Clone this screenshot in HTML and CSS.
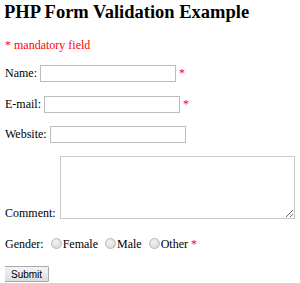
FILE: index.html
```html
<!DOCTYPE html>
<html lang="en">
<head>
	<meta charset="UTF-8">
	<title>PHP Form Validation Example</title>
	<link rel="stylesheet" href="styles.css">
</head>
<body>
	<h2 class="pageTitle">PHP Form Validation Example</h2>
	<p class="note"><span class="error">* mandatory field</span></p>
	<form class="valForm" method="post" action="#">
		<div class="row rowFirst">
			<label for="name">Name:</label>
			<input type="text" id="name" name="name">
			<span class="error">*</span>
		</div>
		<div class="row">
			<label for="email">E-mail:</label>
			<input type="text" id="email" name="email">
			<span class="error">*</span>
		</div>
		<div class="row">
			<label for="website">Website:</label>
			<input type="text" id="website" name="website">
		</div>
		<div class="row rowComment">
			<label for="comment">Comment:</label>
			<textarea id="comment" name="comment"></textarea>
		</div>
		<div class="genderRow">
			Gender:
			<input type="radio" name="gender" value="female">Female
			<input type="radio" name="gender" value="male">Male
			<input type="radio" name="gender" value="other">Other
			<span class="error">*</span>
		</div>
		<div class="submitRow">
			<input type="submit" name="submit" value="Submit">
		</div>
	</form>
</body>
</html>
```

FILE: styles.css
```css
body {
  margin: 0 5px;
  font-family: "Liberation Serif", "Times New Roman", serif;
  font-size: 12px;
  color: #000;
  background: #fff;
}
.pageTitle {
  margin: 2px 0 0 -1px;
  font-size: 18.5px;
  font-weight: bold;
}
.note {
  margin: 15px 0 0;
}
.error {
  color: #ff0000;
}
.valForm .row {
  display: flex;
  align-items: center;
  gap: 3px;
  height: 17px;
  margin-top: 13.5px;
}
.valForm .rowFirst {
  margin-top: 12px;
}
.valForm .row input[type="text"] {
  box-sizing: border-box;
  width: 136px;
  height: 17px;
  margin: 0;
  padding: 1px 2px;
  border: 1px solid #bdbdbd;
  font-size: 10px;
}
.valForm .rowComment {
  align-items: flex-end;
  height: 63px;
  margin-top: 13px;
}
.valForm .rowComment label {
  position: relative;
  top: 2px;
}
.valForm textarea {
  box-sizing: border-box;
  width: 236px;
  height: 63px;
  margin: 0 0 0 1px;
  border: 1px solid #c9c9c9;
}
.genderRow {
  margin-top: 18px;
  line-height: 14px;
}
.genderRow input[type="radio"] {
  -webkit-appearance: none;
  appearance: none;
  box-sizing: border-box;
  width: 11px;
  height: 11px;
  margin: 0 1px 0 4px;
  border: 1px solid #b9b9b9;
  border-radius: 50%;
  background: radial-gradient(circle at 40% 35%, #f4f4f4, #d2d2d2);
  vertical-align: -1px;
}
.submitRow {
  margin-top: 15px;
}
.submitRow input {
  box-sizing: border-box;
  height: 16px;
  margin: 0 0 0 -1px;
  padding: 0 6px;
  border: 1px solid #a9a9a9;
  border-radius: 1px;
  background: linear-gradient(#f5f5f5, #dddddd);
  font-family: "Liberation Sans", Arial, sans-serif;
  font-size: 10px;
  color: #000;
}
```
